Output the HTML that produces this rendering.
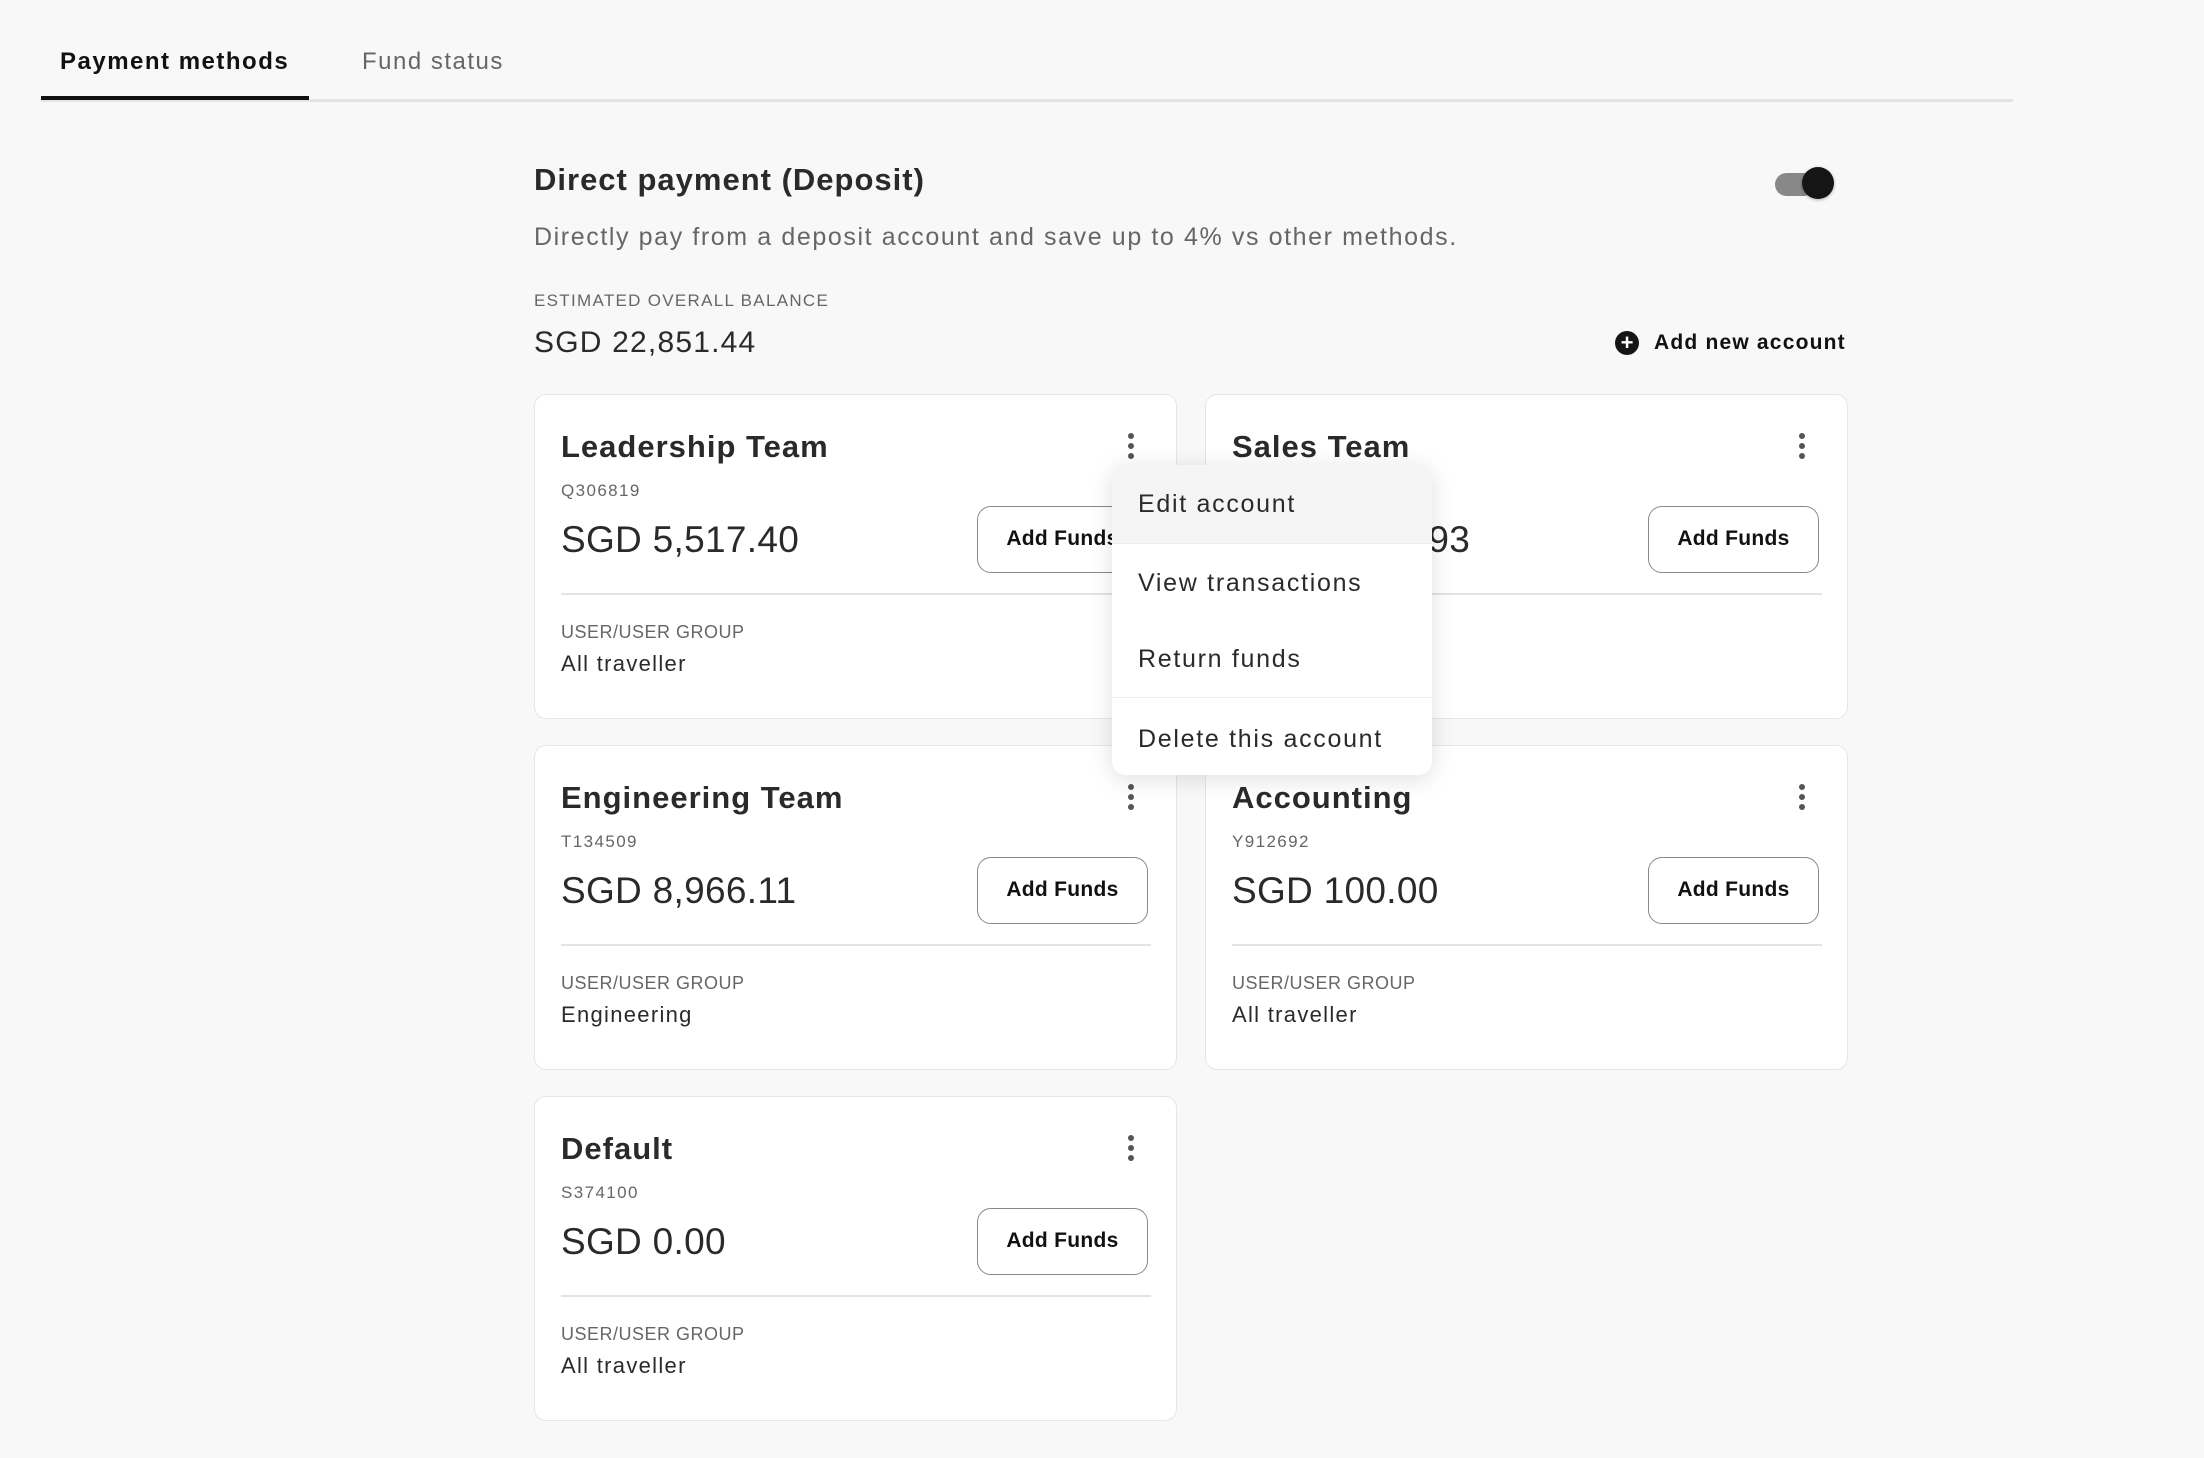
<!DOCTYPE html>
<html><head><meta charset="utf-8"><style>
*{margin:0;padding:0;box-sizing:border-box}
body{width:2204px;height:1458px;background:#f8f8f8;font-family:"Liberation Sans",sans-serif;color:#222;position:relative;overflow:hidden}
.a{position:absolute;white-space:nowrap}
.card{position:absolute;width:643px;height:325px;background:#fff;border:1.5px solid #e6e6e6;border-radius:12px}
.card .t{position:absolute;left:26px;top:34px;font-size:31px;font-weight:bold;color:#2a2a2a;letter-spacing:1px}
.card .c{position:absolute;left:26px;top:86px;font-size:17px;color:#666;letter-spacing:1.4px}
.card .m{position:absolute;left:26px;top:124px;font-size:37px;color:#2a2a2a;letter-spacing:.3px}
.card .b{position:absolute;left:442px;top:111px;width:171px;height:67px;border:1.5px solid #888;border-radius:14px;font-size:21px;font-weight:bold;text-align:center;line-height:64px;color:#111;background:#fff;letter-spacing:.3px}
.card .d{position:absolute;left:26px;top:198px;width:590px;height:2px;background:#e4e4e4}
.card .l{position:absolute;left:26px;top:227px;font-size:18px;color:#666;letter-spacing:.5px}
.card .v{position:absolute;left:26px;top:256px;font-size:22px;color:#2a2a2a;letter-spacing:1.3px}
.dots{position:absolute;left:593px;top:38px;width:6px}
.dots i{display:block;width:6px;height:6px;border-radius:3px;background:#555;margin-bottom:4px}
.menu{position:absolute;left:1112px;top:465px;width:320px;height:310px;background:#fff;border-radius:14px;box-shadow:0 4px 24px rgba(0,0,0,.13);overflow:hidden}
.menu div{position:absolute;left:26px;font-size:25px;color:#2a2a2a;letter-spacing:1.7px}
</style></head><body>
<div class="a" style="left:60px;top:48px;font-size:24px;font-weight:bold;color:#111;letter-spacing:1.5px">Payment methods</div>
<div class="a" style="left:362px;top:48px;font-size:24px;color:#666;letter-spacing:1.5px">Fund status</div>
<div class="a" style="left:41px;top:99px;width:1972px;height:3px;background:#e4e4e4"></div>
<div class="a" style="left:41px;top:96px;width:268px;height:4px;background:#111"></div>

<div class="a" style="left:534px;top:162px;font-size:31px;font-weight:bold;color:#2a2a2a;letter-spacing:1px">Direct payment (Deposit)</div>
<div class="a" style="left:534px;top:223px;font-size:25px;color:#666;letter-spacing:1.6px">Directly pay from a deposit account and save up to 4% vs other methods.</div>
<div class="a" style="left:1775px;top:173px;width:40px;height:23px;border-radius:12px;background:#888"></div>
<div class="a" style="left:1802px;top:167px;width:32px;height:32px;border-radius:16px;background:#151515;box-shadow:0 1px 3px rgba(0,0,0,.3)"></div>
<div class="a" style="left:534px;top:291px;font-size:17px;color:#666;letter-spacing:1.3px">ESTIMATED OVERALL BALANCE</div>
<div class="a" style="left:534px;top:326px;font-size:30px;color:#2a2a2a;letter-spacing:1.2px">SGD 22,851.44</div>
<div class="a" style="left:1615px;top:331px;width:24px;height:24px;border-radius:12px;background:#151515;color:#fff;font-size:22px;font-weight:bold;text-align:center;line-height:24px">+</div>
<div class="a" style="left:1654px;top:331px;font-size:21px;font-weight:bold;color:#111;letter-spacing:1.2px">Add new account</div>

<div class="card" style="left:534px;top:394px"><div class="t">Leadership Team</div><div class="c">Q306819</div><div class="m">SGD 5,517.40</div><div class="b">Add Funds</div><div class="d"></div><div class="l">USER/USER GROUP</div><div class="v">All traveller</div><div class="dots"><i></i><i></i><i></i></div></div>
<div class="card" style="left:1205px;top:394px"><div class="t">Sales Team</div><div class="c">R000000</div><div class="m">SGD 8,267.93</div><div class="b">Add Funds</div><div class="d"></div><div class="l">USER/USER GROUP</div><div class="v">Sales</div><div class="dots"><i></i><i></i><i></i></div></div>
<div class="card" style="left:534px;top:745px"><div class="t">Engineering Team</div><div class="c">T134509</div><div class="m">SGD 8,966.11</div><div class="b">Add Funds</div><div class="d"></div><div class="l">USER/USER GROUP</div><div class="v">Engineering</div><div class="dots"><i></i><i></i><i></i></div></div>
<div class="card" style="left:1205px;top:745px"><div class="t">Accounting</div><div class="c">Y912692</div><div class="m">SGD 100.00</div><div class="b">Add Funds</div><div class="d"></div><div class="l">USER/USER GROUP</div><div class="v">All traveller</div><div class="dots"><i></i><i></i><i></i></div></div>
<div class="card" style="left:534px;top:1096px"><div class="t">Default</div><div class="c">S374100</div><div class="m">SGD 0.00</div><div class="b">Add Funds</div><div class="d"></div><div class="l">USER/USER GROUP</div><div class="v">All traveller</div><div class="dots"><i></i><i></i><i></i></div></div>

<div class="menu">
<div style="left:0;top:0;width:320px;height:78px;background:#f5f5f5"></div>
<div style="left:0;top:78px;width:320px;height:1px;background:#ececec"></div>
<div style="top:25px">Edit account</div>
<div style="top:104px">View transactions</div>
<div style="top:180px">Return funds</div>
<div style="left:0;top:232px;width:320px;height:1px;background:#ececec"></div>
<div style="top:260px">Delete this account</div>
</div>
</body></html>
